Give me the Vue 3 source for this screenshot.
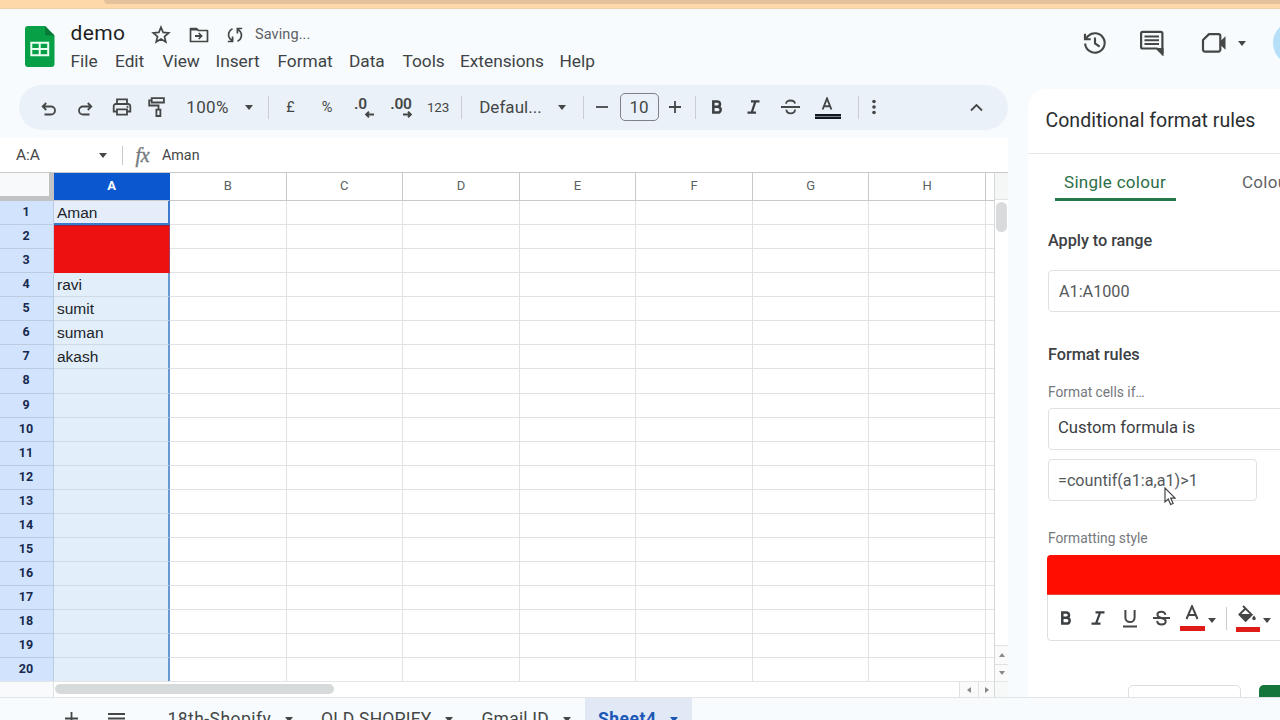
<script setup>
const menus = ['File', 'Edit', 'View', 'Insert', 'Format', 'Data', 'Tools', 'Extensions', 'Help']
const columns = ['A', 'B', 'C', 'D', 'E', 'F', 'G', 'H']
const names = { 1: 'Aman', 4: 'ravi', 5: 'sumit', 6: 'suman', 7: 'akash' }
const rows = Array.from({ length: 20 }, (_, i) => i + 1)
const sheets = [
  { id: 's1', label: '18th-Shopify' },
  { id: 's2', label: 'OLD SHOPIFY' },
  { id: 's3', label: 'Gmail ID' },
  { id: 's4', label: 'Sheet4', active: true },
]
</script>

<template>
  <div class="page">
    <div class="browser"><div class="browser-tab"></div></div>

    <header class="header">
      <svg class="logo" width="30" height="41" viewBox="0 0 30 41">
        <path d="M3 0H20L29.5 9.500V38a3 3 0 0 1-3 3H3a3 3 0 0 1-3-3V3a3 3 0 0 1 3-3z" fill="#07a047" />
        <path d="M20 0l9.500 9.500H22a2 2 0 0 1-2-2z" fill="#087a38" />
        <path d="M6.300 16.700h16.900v12.600H6.300z M7.400 22.900h15 M14.700 16.700v12.600" fill="none" stroke="#e9fff0" stroke-width="2" />
      </svg>
      <div class="doc">
        <div class="title-row">
          <span class="title">demo</span>
          <svg class="ic" width="20" height="20" viewBox="0 0 20 20"><path d="M10 2.300l2.150 5.150 5.550.45-4.250 3.600 1.350 5.400L10 13.950 5.200 16.900l1.350-5.400L2.300 7.900l5.550-.45z" fill="none" stroke="#444746" stroke-width="1.700" /></svg>
          <svg class="ic" width="20" height="18" viewBox="0 0 20 18"><path d="M1.500 2.500h6l2 2h9v11h-17z" fill="none" stroke="#444746" stroke-width="1.700" stroke-linejoin="round" /><path d="M1 2h6.500l2 2.500H1zM6 9.100h6v1.800H6z" fill="#444746" /><path d="M9.700 7l3 3-3 3" fill="none" stroke="#444746" stroke-width="1.600" /></svg>
          <svg class="ic" width="18" height="18" viewBox="0 0 18 18" fill="none" stroke="#444746" stroke-width="1.700"><path d="M6.500 2.700C2.500 4.300 1.400 9.400 3.700 12.400L6.300 15M6.600 10.500v5H1.800M11.500 15.300c4-1.600 5.100-6.700 2.800-9.700L11.700 3M11.400 7.500v-5h4.800" /></svg>
          <span class="saving">Saving...</span>
        </div>
        <nav class="menu"><span v-for="m in menus" :key="m">{{ m }}</span></nav>
      </div>
      <div class="actions">
        <svg width="26" height="26" viewBox="-1 -1 28 28" fill="none" stroke="#444746" stroke-width="2.300"><path d="M2.400 13.500A10.500 10.500 0 1 0 5.300 5.700L3 8.300M2.200 3v6h6.200M13 7v6.500l5 3.500" /></svg>
        <svg width="26" height="26" viewBox="0 0 26 26"><path d="M23.400 24V3.400a1.500 1.500 0 0 0-1.500-1.500H3.600a1.500 1.500 0 0 0-1.500 1.500V17a1.500 1.500 0 0 0 1.500 1.500H18z" fill="none" stroke="#444746" stroke-width="2.200" /><path d="M17 18h7.500v6z" fill="#444746" /><path d="M5.500 6.500h14.500M5.500 10.200h14.500M5.500 13.900h14.500" stroke="#444746" stroke-width="2" /></svg>
        <svg class="cam" width="26" height="22" viewBox="0 0 26 22"><path d="M8 2.100h9.500a1.800 1.800 0 0 1 1.800 1.800v13.900a1.800 1.800 0 0 1-1.800 1.800H3.800A1.800 1.800 0 0 1 2 17.800V8z" fill="none" stroke="#444746" stroke-width="2.200" stroke-linejoin="round" /><path d="M19 9.500L24.500 4.200v13.600L19 12.500z" fill="#444746" /></svg>
        <i class="caret"></i>
        <div class="avatar"></div>
      </div>
    </header>

    <div class="body">
      <main class="sheet">
        <div class="toolbar">
          <svg width="16" height="16" viewBox="0 0 16 16" class="ln down"><path d="M5.200 2L1.700 5.500l3.500 3.500M2 5.500h8a4 4 0 0 1 0 8H3.500" /></svg>
          <svg width="16" height="16" viewBox="0 0 16 16" class="ln down"><path d="M10.800 2l3.500 3.500L10.800 9M14 5.500H6a4 4 0 0 0 0 8h6.500" /></svg>
          <svg width="20" height="20" viewBox="0 0 20 20" class="ln"><path d="M5 6V2.300h10V6M5 14.500H1.700V9.200A2.200 2.200 0 0 1 3.900 7h12.200a2.200 2.200 0 0 1 2.200 2.200v5.300H15M5 12.300h10v5.400H5z" /><path d="M14.600 9.800h1.800" /></svg>
          <svg width="20" height="22" viewBox="0 0 20 22" class="ln"><path d="M4.700 2.200h12.200v4.300H4.700zM4.700 4.300H2.200v5.200h9.300v4M9.400 13.700h4v6.300h-4z" /></svg>
          <span class="big">100%</span>
          <i class="caret"></i>
          <i class="sep"></i>
          <span class="small">£</span>
          <span class="small">%</span>
          <span class="dec one"><b>.0</b><svg width="9" height="7" viewBox="0 0 9 7"><path d="M4 .7L1 3.500 4 6.300M1 3.500h8" /></svg></span>
          <span class="dec two"><b>.00</b><svg width="9" height="7" viewBox="0 0 9 7"><path d="M5 .7L8 3.500 5 6.300M8 3.500H0" /></svg></span>
          <span class="small num">123</span>
          <i class="sep"></i>
          <span class="big fontname">Defaul...</span>
          <i class="caret"></i>
          <i class="sep"></i>
          <svg width="12" height="12" viewBox="0 0 12 12" class="ln"><path d="M0 6h12" /></svg>
          <span class="size">10</span>
          <svg width="12" height="12" viewBox="0 0 12 12" class="ln"><path d="M0 6h12M6 0v12" /></svg>
          <i class="sep"></i>
          <svg width="12" height="14" viewBox="0 0 12 14" class="bold"><path d="M2.300 1.400h4a2.700 2.700 0 0 1 0 5.400h-4zM2.300 6.800h4.500a2.850 2.850 0 0 1 0 5.800H2.300z" /></svg>
          <svg width="13" height="14" viewBox="0 0 13 14" class="bold it"><path d="M4 1.400h8.500M.5 12.600H9M8.400 1.400L4.700 12.600" /></svg>
          <svg width="19" height="18" viewBox="0 0 19 18" class="ln"><path d="M0 9h19M14 5.700C13.700 3.500 12 2.500 9.500 2.500c-2.700 0-4.400 1.300-4.400 3.200M5.300 11.600c.3 2.500 2 3.800 4.400 3.800 2.600 0 4.300-1.300 4.300-3.800" /></svg>
          <svg width="26" height="22" viewBox="0 0 26 22" class="colour"><path d="M7.600 12.500L12 1.500l4.400 11M9 9.200h6" fill="none" stroke="#444746" stroke-width="1.900" /><path d="M0 17h26v2.200H0zM0 19.800h26v2.200H0z" fill="#111820" /></svg>
          <i class="sep"></i>
          <svg width="4" height="16" viewBox="0 0 4 16" fill="#444746"><circle cx="2" cy="2.500" r="1.800" /><circle cx="2" cy="8" r="1.800" /><circle cx="2" cy="13.500" r="1.800" /></svg>
          <svg width="13" height="9" viewBox="0 0 13 9" class="ln chev"><path d="M1 7.500L6.500 2 12 7.500" /></svg>
        </div>

        <div class="formula-bar">
          <span class="namebox">A:A</span><i class="caret"></i><i class="bar"></i>
          <span class="fx">fx</span><span class="fval">Aman</span>
        </div>

        <div class="gridwrap">
          <div class="cells">
            <div class="corner"></div>
            <div v-for="c in columns" :key="c" class="colhead" :class="{ sel: c === 'A' }">{{ c }}</div>
            <div class="colhead rest"></div>
            <template v-for="r in rows" :key="r">
              <div class="rowhead">{{ r }}</div>
              <div class="cell a" :class="{ first: r === 1, red: r === 2 || r === 3, redtop: r === 2 }">{{ names[r] }}</div>
              <div v-for="c in 7" :key="c" class="cell"></div>
              <div class="cell rest"></div>
            </template>
          </div>
          <div class="vscroll">
            <div class="vhead"></div>
            <div class="vtrack"><div class="vthumb"></div></div>
            <div class="btn"><i class="tri up"></i></div>
            <div class="btn"><i class="tri dn"></i></div>
          </div>
          <div class="hscroll">
            <div class="hleft"></div>
            <div class="htrack"><div class="hthumb"></div></div>
            <div class="hbtn"><i class="tri lf"></i></div>
            <div class="hbtn"><i class="tri rt"></i></div>
          </div>
          <div class="hend"></div>
        </div>
      </main>

      <aside class="panel">
        <h2>Conditional format rules</h2>
        <div class="tabs"><span class="on">Single colour</span><span class="off">Colour</span></div>
        <h3 class="h-range">Apply to range</h3>
        <div class="field range">A1:A1000</div>
        <h3 class="h-rules">Format rules</h3>
        <p class="lab">Format cells if…</p>
        <div class="field cond">Custom formula is</div>
        <div class="field formula">=countif(a1:a,a1)&gt;1
          <svg class="cursor" width="12" height="19" viewBox="0 0 12 19"><path d="M1 1v14l3.300-3 2.300 5.500 2.500-1-2.400-5.400H11z" fill="#fff" stroke="#444" stroke-width="1.200" /></svg>
        </div>
        <p class="lab style">Formatting style</p>
        <div class="style-box">
          <div class="swatch"></div>
          <div class="style-tools">
            <svg width="12" height="14" viewBox="0 0 12 14" class="bold"><path d="M2.300 1.400h4a2.700 2.700 0 0 1 0 5.400h-4zM2.300 6.800h4.500a2.850 2.850 0 0 1 0 5.800H2.300z" /></svg>
            <svg width="14" height="14" viewBox="0 0 14 14" class="bold it"><path d="M4.500 1.400h9M.5 12.600h9M9.200 1.400L5 12.600" /></svg>
            <svg class="und" width="14" height="18" viewBox="0 0 14 18"><path d="M2.400 0v7.500a4.600 4.600 0 0 0 9.200 0V0M0 16.600h14" fill="none" stroke="#444746" stroke-width="2" /></svg>
            <svg width="17" height="16" viewBox="0 0 17 16"><path d="M0 8h17M12.500 4.800C12 2.800 10.700 1.700 8.500 1.700c-2.500 0-4.100 1.300-4.100 3.100 0 1.600 1.300 2.500 4.100 3.200 2.800.7 4.200 1.500 4.200 3.200 0 1.900-1.700 3.200-4.200 3.200-2.400 0-4.100-1.200-4.400-3.400" fill="none" stroke="#444746" stroke-width="2" /></svg>
            <svg class="tall" width="25" height="26" viewBox="0 0 25 26"><path d="M6.500 14L12 1.200 17.500 14M8.500 10h7" fill="none" stroke="#444746" stroke-width="2" /><path d="M0 21h25v5H0z" fill="#df1c17" /></svg>
            <i class="caret"></i>
            <i class="sep"></i>
            <svg class="tall" width="24" height="27" viewBox="0 0 24 27"><path d="M7 1l8.700 8.700L9.600 15.800 3.400 9.600 9.500 3.500" fill="none" stroke="#444746" stroke-width="1.900" /><path d="M3.500 9h12L9.600 15.500z" fill="#444746" /><path d="M18 10.500s1.800 2 1.800 3a1.800 1.800 0 0 1-3.600 0c0-1 1.800-3 1.800-3z" fill="#444746" /><path d="M0 22h24v5H0z" fill="#df1c17" /></svg>
            <i class="caret"></i>
          </div>
        </div>
        <div class="buttons"><div class="cancel"></div><div class="done"></div></div>
      </aside>
    </div>

    <footer class="sheets">
      <svg class="plus" width="13" height="13" viewBox="0 0 13 13"><path d="M0 6.500h13M6.500 0v13" stroke="#444746" stroke-width="1.800" /></svg>
      <svg class="list" width="17" height="14" viewBox="0 0 17 14"><path d="M0 1h17M0 5.500h17M0 10h17" stroke="#444746" stroke-width="1.800" /></svg>
      <div v-for="s in sheets" :key="s.id" class="stab" :class="[s.id, { active: s.active }]"><span>{{ s.label }}</span><i class="caret"></i></div>
    </footer>
  </div>
</template>

<style>
html, body { margin: 0; overflow: hidden; }
</style>

<style scoped>
* { box-sizing: border-box; }
.page { width: 1280px; height: 720px; overflow: hidden; display: flex; flex-direction: column; background: #f7fbfd; font-family: Roboto, "Liberation Sans", sans-serif; color: #444746; }
.page span { white-space: nowrap; }
.browser { height: 9px; flex: none; background: #fdd9aa; border-bottom: 1px solid #ecd0aa; }
.browser-tab { margin-left: 104px; height: 4px; background: #e3c29b; border-bottom-left-radius: 4px; }
.caret { display: block; flex: none; width: 0; height: 0; border: 4.500px solid transparent; border-top: 5px solid #444746; border-bottom: 0; }

.header { height: 76px; flex: none; display: flex; }
.logo { margin: 17px 0 0 24.500px; flex: none; }
.doc { margin-left: 16px; padding-top: 11px; }
.title-row { display: flex; height: 28px; align-items: center; }
.title { font-size: 21px; width: 80px; letter-spacing: .35px; color: #1f1f1f; line-height: 26px; height: 28px; }
.ic { flex: none; margin-top: 1px; }
.title-row .title + .ic { margin-left: .5px; }
.title-row .ic + .ic { margin-left: 17.500px; }
.saving { font-size: 14.500px; margin-left: 11px; margin-top: 1px; letter-spacing: .1px; color: #5c6063; }
.menu { display: grid; grid-template-columns: 44.500px 47.500px 53px 62px 71.500px 53.500px 57.500px 99.500px 50px; font-size: 17.300px; line-height: 26px; letter-spacing: -.02px; color: #3f4345; }
.actions { margin-left: auto; display: flex; height: 68px; align-items: center; width: 198.500px; flex: none; }
.actions svg { flex: none; }
.actions svg + svg { margin-left: 31px; }
.actions svg + .cam { margin-left: 36px; }
.actions .caret { margin-left: 11px; }
.avatar { width: 44px; height: 44px; border-radius: 50%; background: #b6e0fa; margin-left: 27px; flex: none; }

.body { height: 612px; flex: none; display: flex; gap: 20px; }
.sheet { width: 1008px; flex: none; display: flex; flex-direction: column; }
.toolbar { margin-left: 19px; height: 45px; flex: none; border-radius: 23px; background: #ebf1f9; padding: 0 25px 1px 12px; display: grid; justify-items: center; align-items: center; grid-template-columns: 36px 36px 37px 34px 67px 15px 25px 19px 54px 20px 54px 20px 27px 71px 32px 10px 28px 46px 26px 15px 28px 44px 30px 46px 14px 17px 1fr; }
.ln { fill: none; stroke: #444746; stroke-width: 1.800; }
.bold { fill: none; stroke: #3c4043; stroke-width: 2.500; }
.it { stroke-width: 2.200; }
.down { margin-top: 3px; }
.colour { margin-top: 2px; }
.chev { justify-self: end; margin-top: 1px; }
.sep { width: 1px; height: 23px; background: #c9ced5; }
.big { font-size: 17px; letter-spacing: .3px; }
.fontname { letter-spacing: .05px; }
.small { font-size: 14.500px; }
.num { font-size: 13.500px; letter-spacing: -.3px; }
.dec { display: flex; flex-direction: column; align-items: flex-end; height: 21px; }
.dec b { font-size: 15.500px; font-weight: 600; line-height: 15px; letter-spacing: -.2px; height: 14px; }
.dec svg { fill: none; stroke: #444746; stroke-width: 1.900; flex: none; }
.dec.one svg { margin-right: -7px; }
.dec.one { margin-right: 7px; }
.size { width: 39px; height: 28px; border: 1.300px solid #7d8287; border-radius: 5px; text-align: center; font-size: 17px; line-height: 26px; }

.formula-bar { margin-top: 8px; height: 34px; background: #fff; display: flex; align-items: center; padding-left: 16px; font-size: 15.500px; flex: none; }
.namebox { width: 83px; font-size: 15.500px; }
.bar { width: 1px; height: 19px; background: #c8cbce; margin: 0 13px 0 14.500px; }
.fx { font: italic 20px "Liberation Serif", serif; width: 26.500px; color: #777b7e; letter-spacing: -.3px; -webkit-text-stroke: .4px #777b7e; }
.fval { font-size: 14.300px; }

.gridwrap { height: 525px; flex: none; display: grid; grid-template: 510px 15px / 994px 14px; background: #fff; }
.cells { display: grid; grid-template-columns: 54px 116px repeat(7, 116.570px) 1fr; grid-template-rows: 28px repeat(20, 24.070px); overflow: hidden; border-top: 1px solid #c7c9ca; }
.corner { background: #f8f9fa; border: solid #c1c3c4; border-width: 0 5px 5px 0; }
.colhead { border-right: 1px solid #c7c9ca; border-bottom: 1px solid #c7c9ca; text-align: center; font-size: 13px; line-height: 26px; color: #5b5f62; }
.colhead.sel { background: #0b57d0; color: #fff; font-weight: 700; border-right-color: #0b57d0; }
.rest { border-right: 0 !important; }
.rowhead { background: #d2e3fd; border-right: 1px solid #bccbe0; border-bottom: 1px solid #bccbe0; text-align: center; font-size: 12.500px; font-weight: 700; line-height: 21.500px; color: #17294d; padding-right: 1px; }
.cell { border-right: 1px solid #e0e2e3; border-bottom: 1px solid #e0e2e3; }
.cell.a { background: #e2eef9; border-right: 2px solid #6699d0; border-bottom-color: #cfdae4; padding-left: 3px; font: 15.500px/24px "Liberation Sans", Arial, sans-serif; color: #202428; }
.cell.first { background: #e5edfb; border: 2px solid #3c7bcb; border-left: 0; border-top: 0; }
.cell.red { background: #ee1111; border-right: 1px solid #9b4169; border-bottom-color: #ee1111; }
.cell.redtop { border-top: 1px solid #8c2544; }
.vscroll { border-left: 1px solid #d5d7d8; display: flex; flex-direction: column; border-top: 1px solid #c7c9ca; }
.vhead { height: 27px; background: #f5f6f6; border-bottom: 1px solid #e0e2e3; }
.vtrack { flex: 1; padding: 2px 1px; }
.vthumb { height: 30px; width: 11px; border-radius: 6px; background: #d8dadb; }
.btn { height: 18.500px; border-top: 1px solid #dfe1e2; background: #fafafa; display: flex; align-items: center; justify-content: center; }
.tri { width: 0; height: 0; border: 3.500px solid transparent; }
.up { border-bottom: 4px solid #85898b; border-top: 0; }
.dn { border-top: 4px solid #85898b; border-bottom: 0; }
.lf { border-right: 4px solid #85898b; border-left: 0; }
.rt { border-left: 4px solid #85898b; border-right: 0; }
.hscroll { display: flex; border-top: 1px solid #e3e5e6; margin-top: -1px; }
.hleft { width: 54px; border-right: 1px solid #e0e2e3; background: #f9fafb; }
.htrack { flex: 1; padding: 2px 1px; }
.hthumb { width: 279px; height: 10px; border-radius: 5px; background: #d7dadb; }
.hbtn { width: 19px; border-left: 1px solid #dfe1e2; background: #fafafa; display: flex; align-items: center; justify-content: center; }
.hbtn + .hbtn { width: 16px; }
.hend { border-left: 1px solid #d5d7d8; border-top: 1px solid #e3e5e6; background: #f7f8f8; margin-top: -1px; }

.panel { width: 252px; flex: none; margin-top: 4px; height: 608px; background: #fff; border-radius: 18px 0 0 0; padding-left: 20px; overflow: hidden; display: flex; flex-direction: column; }
.panel > * { flex: none; }
.panel h2 { margin: 0 0 0 -20px; padding-left: 17.500px; height: 65px; line-height: 63px; font-size: 19.500px; font-weight: 400; letter-spacing: .02px; color: #2b2d2f; border-bottom: 1px solid #e4e6e7; white-space: nowrap; }
.tabs { display: flex; height: 46.500px; font-size: 17px; line-height: 56px; overflow: hidden; letter-spacing: .3px; }
.tabs span { flex: none; }
.on { width: 121px; margin-left: 6.500px; text-align: center; color: #2c6e47; border-bottom: 3px solid #24784a; }
.off { margin-left: 66.500px; color: #5f6368; }
.panel h3 { margin: 0; font-size: 16.300px; line-height: 22px; font-weight: 500; letter-spacing: -.05px; color: #3c4043; }
.panel .h-range { padding-top: 29.500px; height: 69.500px; }
.field { height: 42px; border: 1px solid #dfe1e3; border-radius: 4px; font-size: 16.200px; line-height: 42px; padding-left: 9px; white-space: nowrap; color: #55595c; }
.range, .cond { width: 240px; }
.range { padding-left: 10px; }
.panel .h-rules { margin-top: 32px; height: 22px; }
.lab { margin: 16px 0 0; height: 20px; font-size: 13.800px; line-height: 20px; color: #75797c; }
.cond { margin-top: 6px; font-size: 16.700px; color: #3c4043; line-height: 37px; }
.formula { width: 209px; margin-top: 9px; position: relative; }
.cursor { position: absolute; left: 115px; top: 27px; }
.lab.style { margin-top: 27px; }
.style-box { margin: 7px 0 0 -1px; width: 260px; height: 86px; border: 1px solid #dddfe1; border-radius: 4px; }
.swatch { height: 40px; margin: -1px 0 0 -1px; background: #fe0d00; border-radius: 4px 0 0 0; border-bottom: 1px solid #df4a40; }
.style-tools { display: flex; align-items: center; height: 46px; padding-left: 12px; }
.style-tools > * { flex: none; }
.style-tools svg + svg { margin-left: 18.500px; }
.style-tools .und { margin-top: 2px; }
.style-tools .und + svg { margin-left: 16px; }
.style-tools svg + .tall { margin-left: 10px; }
.style-tools .caret { margin: 5px 0 0 3px; }
.style-tools .sep { margin-left: 10px; }
.style-tools .sep + .tall { margin-left: 8.500px; }
.buttons { display: flex; margin: 43.500px 0 0 80px; gap: 18px; }
.cancel { width: 113px; height: 36px; border: 1.500px solid #dcdfe1; border-radius: 5px; flex: none; }
.done { width: 80px; height: 36px; border-radius: 5px; background: #15753b; flex: none; }

.sheets { flex: 1; display: flex; border-top: 1px solid #e2e4e6; align-items: flex-start; overflow: hidden; }
.plus { margin: 14px 0 0 64.500px; flex: none; }
.list { margin: 15px 0 0 30px; flex: none; }
.stab { display: flex; align-items: center; height: 42px; font-size: 17.500px; flex: none; }
.stab .caret { margin-left: auto; margin-top: 0; }
.s1 { margin-left: 43px; width: 125px; letter-spacing: .45px; }
.s2 { margin-left: 28.500px; width: 132px; letter-spacing: .2px; }
.s3 { margin-left: 28.500px; width: 89px; letter-spacing: .2px; }
.s4 { margin-left: 14px; width: 107px; padding: 0 13.500px; letter-spacing: .5px; }
.active { background: #e0e9f5; color: #1c57b7; font-weight: 700; }
.active .caret { border-top-color: #1c57b7; }
</style>
